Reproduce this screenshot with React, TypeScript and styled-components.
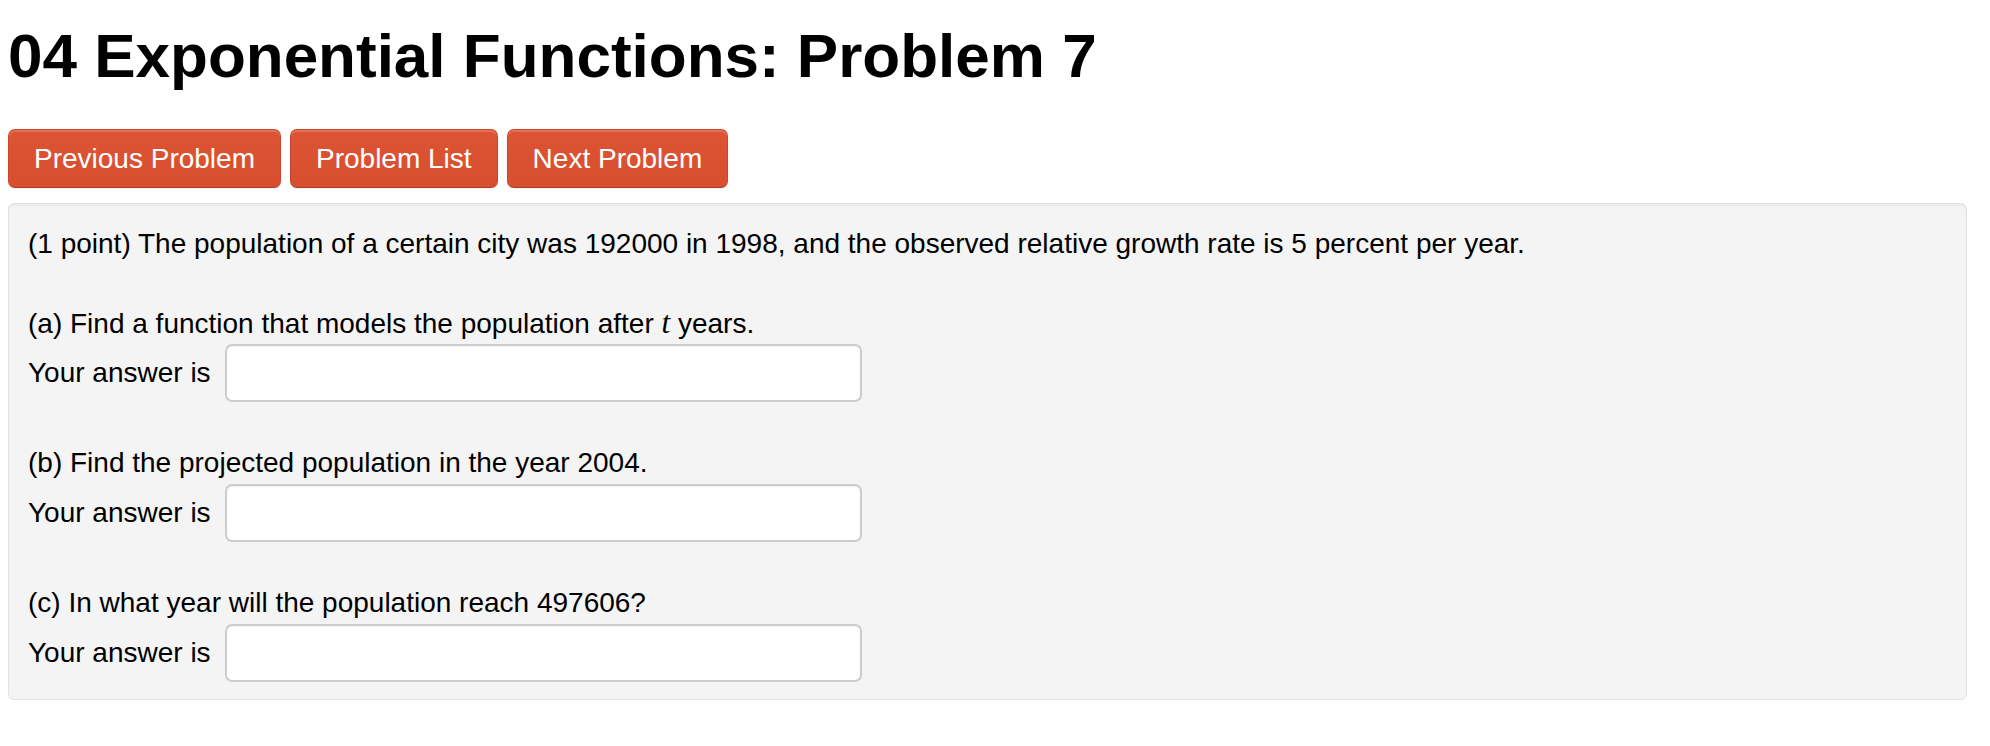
import styled, { createGlobalStyle } from "styled-components"

const GlobalStyle = createGlobalStyle`
body {
    margin: 0;
    background: #ffffff;
    color: #000000;
    font-family: "Liberation Sans", Arial, Helvetica, sans-serif;
}
`

const App = () => {
    const parts = [
        { label: "(a)", text: <>Find a function that models the population after <MathVar>t</MathVar> years.</> },
        { label: "(b)", text: <>Find the projected population in the year 2004.</> },
        { label: "(c)", text: <>In what year will the population reach 497606?</> },
    ]
    return (
        <Page>
            <GlobalStyle />
            <Title>04 Exponential Functions: Problem 7</Title>
            <NavRow>
                <NavButton>Previous Problem</NavButton>
                <NavButton>Problem List</NavButton>
                <NavButton>Next Problem</NavButton>
            </NavRow>
            <Well>
                <Intro>
                    (1 point) The population of a certain city was 192000 in 1998, and the observed relative growth rate is 5 percent per year.
                </Intro>
                {parts.map((p, i) => (
                    <Part key={p.label} $last={i === parts.length - 1}>
                        <Question>{p.label} {p.text}</Question>
                        <AnswerRow>
                            <AnswerLabel>Your answer is</AnswerLabel>
                            <AnswerInput type="text" />
                        </AnswerRow>
                    </Part>
                ))}
            </Well>
        </Page>
    )
}

export default App

const Page = styled.div`
padding: 0 23px 0 8px;
`
const Title = styled.h1`
margin: 21px 0 0 0;
font-size: 62px;
line-height: 69px;
font-weight: 700;
color: #000;
`
const NavRow = styled.div`
display: flex;
gap: 9px;
margin-top: 39px;
`
const NavButton = styled.button`
height: 59px;
padding: 0 25px;
font-family: "Liberation Sans", Arial, sans-serif;
font-size: 28px;
color: #ffffff;
background: linear-gradient(#dd5434, #d84f30);
border: 1px solid #c8462b;
border-bottom-color: #ad3c23;
border-radius: 7px;
box-shadow: inset 0 2px 0 rgba(255, 255, 255, 0.18), 0 1px 2px rgba(0, 0, 0, 0.08);
cursor: pointer;
`
const Well = styled.div`
margin-top: 15px;
padding: 20px 19px 16px 19px;
background-color: #f4f4f4;
border: 1px solid #e2e2e2;
border-radius: 6px;
box-shadow: inset 0 2px 2px rgba(0, 0, 0, 0.04);
font-size: 28px;
line-height: 40px;
`
const Intro = styled.div`
margin-bottom: 39px;
`
const Part = styled.div<{ $last?: boolean }>`
margin-bottom: ${p => (p.$last ? "0" : "40px")};
`
const Question = styled.div`
height: 40px;
`
const MathVar = styled.span`
font-family: "Liberation Serif", "Times New Roman", serif;
font-style: italic;
font-size: 31px;
`
const AnswerRow = styled.div`
display: flex;
align-items: center;
height: 60px;
`
const AnswerLabel = styled.span`
margin-right: 14px;
`
const AnswerInput = styled.input`
width: 637px;
height: 58px;
box-sizing: border-box;
background: #ffffff;
border: 2px solid #cccccc;
border-radius: 7px;
box-shadow: inset 0 1px 2px rgba(0, 0, 0, 0.06);
font-size: 28px;
padding: 0 12px;
`
